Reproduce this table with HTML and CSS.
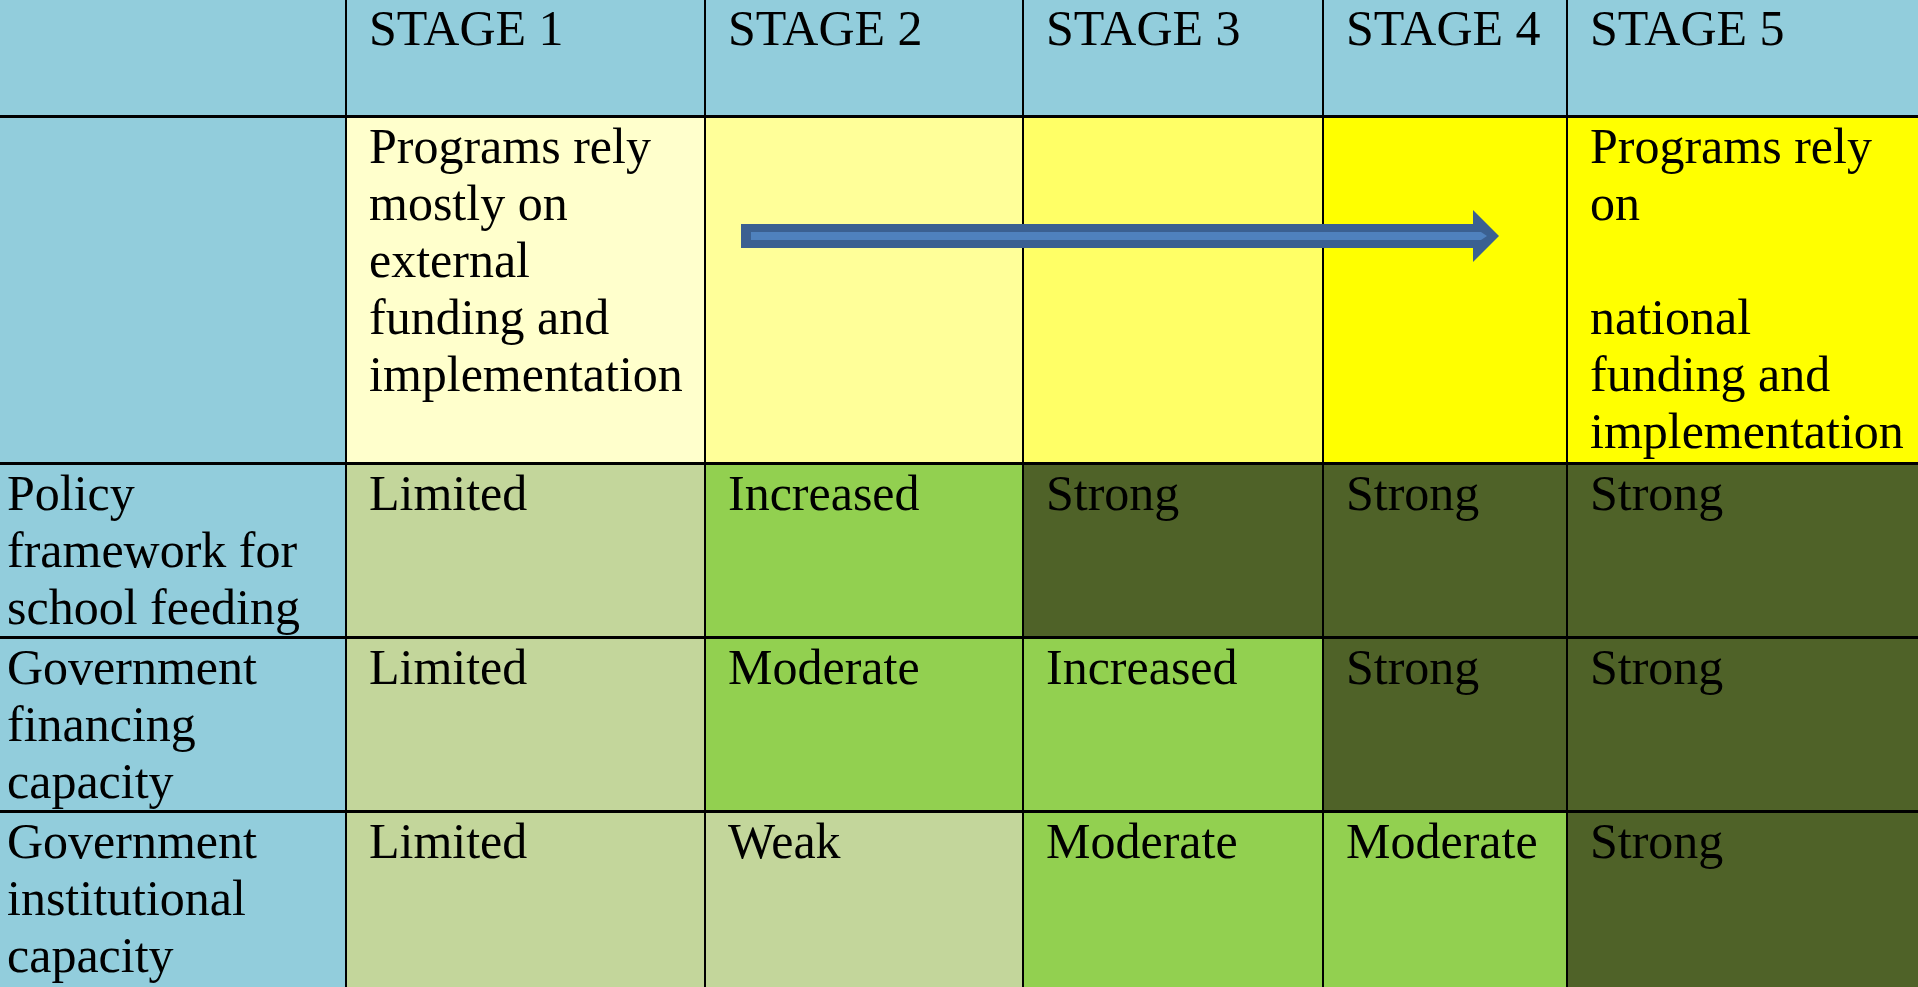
FILE: index.html
```html
<!DOCTYPE html>
<html lang="en">
<head>
<meta charset="utf-8">
<title>School feeding stages</title>
<link rel="stylesheet" href="styles.css">
</head>
<body>
<div class="board">
  <div class="grid">
    <div class="cell blue first"></div>
    <div class="cell blue"><p class="txt">STAGE 1</p></div>
    <div class="cell blue"><p class="txt">STAGE 2</p></div>
    <div class="cell blue"><p class="txt">STAGE 3</p></div>
    <div class="cell blue"><p class="txt">STAGE 4</p></div>
    <div class="cell blue"><p class="txt">STAGE 5</p></div>

    <div class="cell blue first"></div>
    <div class="cell y1 narrow"><p class="txt">Programs rely mostly on external funding and implementation</p></div>
    <div class="cell y2"></div>
    <div class="cell y3"></div>
    <div class="cell y4"></div>
    <div class="cell y4"><p class="txt">Programs rely on</p><p class="txt blank">&nbsp;</p><p class="txt">national funding and implementation</p></div>

    <div class="cell blue first"><p class="txt">Policy framework for school feeding</p></div>
    <div class="cell g1"><p class="txt">Limited</p></div>
    <div class="cell g2"><p class="txt">Increased</p></div>
    <div class="cell g3"><p class="txt">Strong</p></div>
    <div class="cell g3"><p class="txt">Strong</p></div>
    <div class="cell g3"><p class="txt">Strong</p></div>

    <div class="cell blue first"><p class="txt">Government financing capacity</p></div>
    <div class="cell g1"><p class="txt">Limited</p></div>
    <div class="cell g2"><p class="txt">Moderate</p></div>
    <div class="cell g2"><p class="txt">Increased</p></div>
    <div class="cell g3"><p class="txt">Strong</p></div>
    <div class="cell g3"><p class="txt">Strong</p></div>

    <div class="cell blue first"><p class="txt">Government institutional capacity</p></div>
    <div class="cell g1"><p class="txt">Limited</p></div>
    <div class="cell g1"><p class="txt">Weak</p></div>
    <div class="cell g2"><p class="txt">Moderate</p></div>
    <div class="cell g2"><p class="txt">Moderate</p></div>
    <div class="cell g3"><p class="txt">Strong</p></div>
  </div>

  <svg class="arrow" width="762" height="56" viewBox="0 0 762 56" aria-hidden="true">
    <path d="M1,16 H733 V2 L759,28 L733,54 V40 H1 Z" fill="#3b6091"/>
    <path d="M11,24 H741 L747,28 L741,32 H11 Z" fill="#4f81bd"/>
  </svg>
</div>
</body>
</html>
```

FILE: styles.css
```css
html, body {
  margin: 0;
  padding: 0;
  background: #000;
}

body {
  width: 1918px;
  height: 987px;
  overflow: hidden;
  font-family: "Liberation Serif", "Times New Roman", serif;
  color: #000;
}

.board {
  position: relative;
  width: 1918px;
  height: 987px;
}

.grid {
  display: grid;
  grid-template-columns: 345px 357px 316px 298px 242px 350px;
  grid-template-rows: 115px 344px 171px 171px 174px;
  column-gap: 2px;
  row-gap: 3px;
  background: #000;
  width: 1918px;
  height: 987px;
}

.cell {
  padding: 0 4px 0 22px;
  min-width: 0;
}

.cell.first {
  padding-left: 7px;
}

.cell.narrow {
  padding-right: 14px;
}

.txt {
  margin: 0;
  font-size: 50px;
  line-height: 57px;
}

.blue { background: #92cddc; }
.y1 { background: #ffffcc; }
.y2 { background: #ffff99; }
.y3 { background: #ffff66; }
.y4 { background: #ffff00; }
.g1 { background: #c3d69b; }
.g2 { background: #92d050; }
.g3 { background: #4f6228; }

.arrow {
  position: absolute;
  left: 740px;
  top: 208px;
}
```
